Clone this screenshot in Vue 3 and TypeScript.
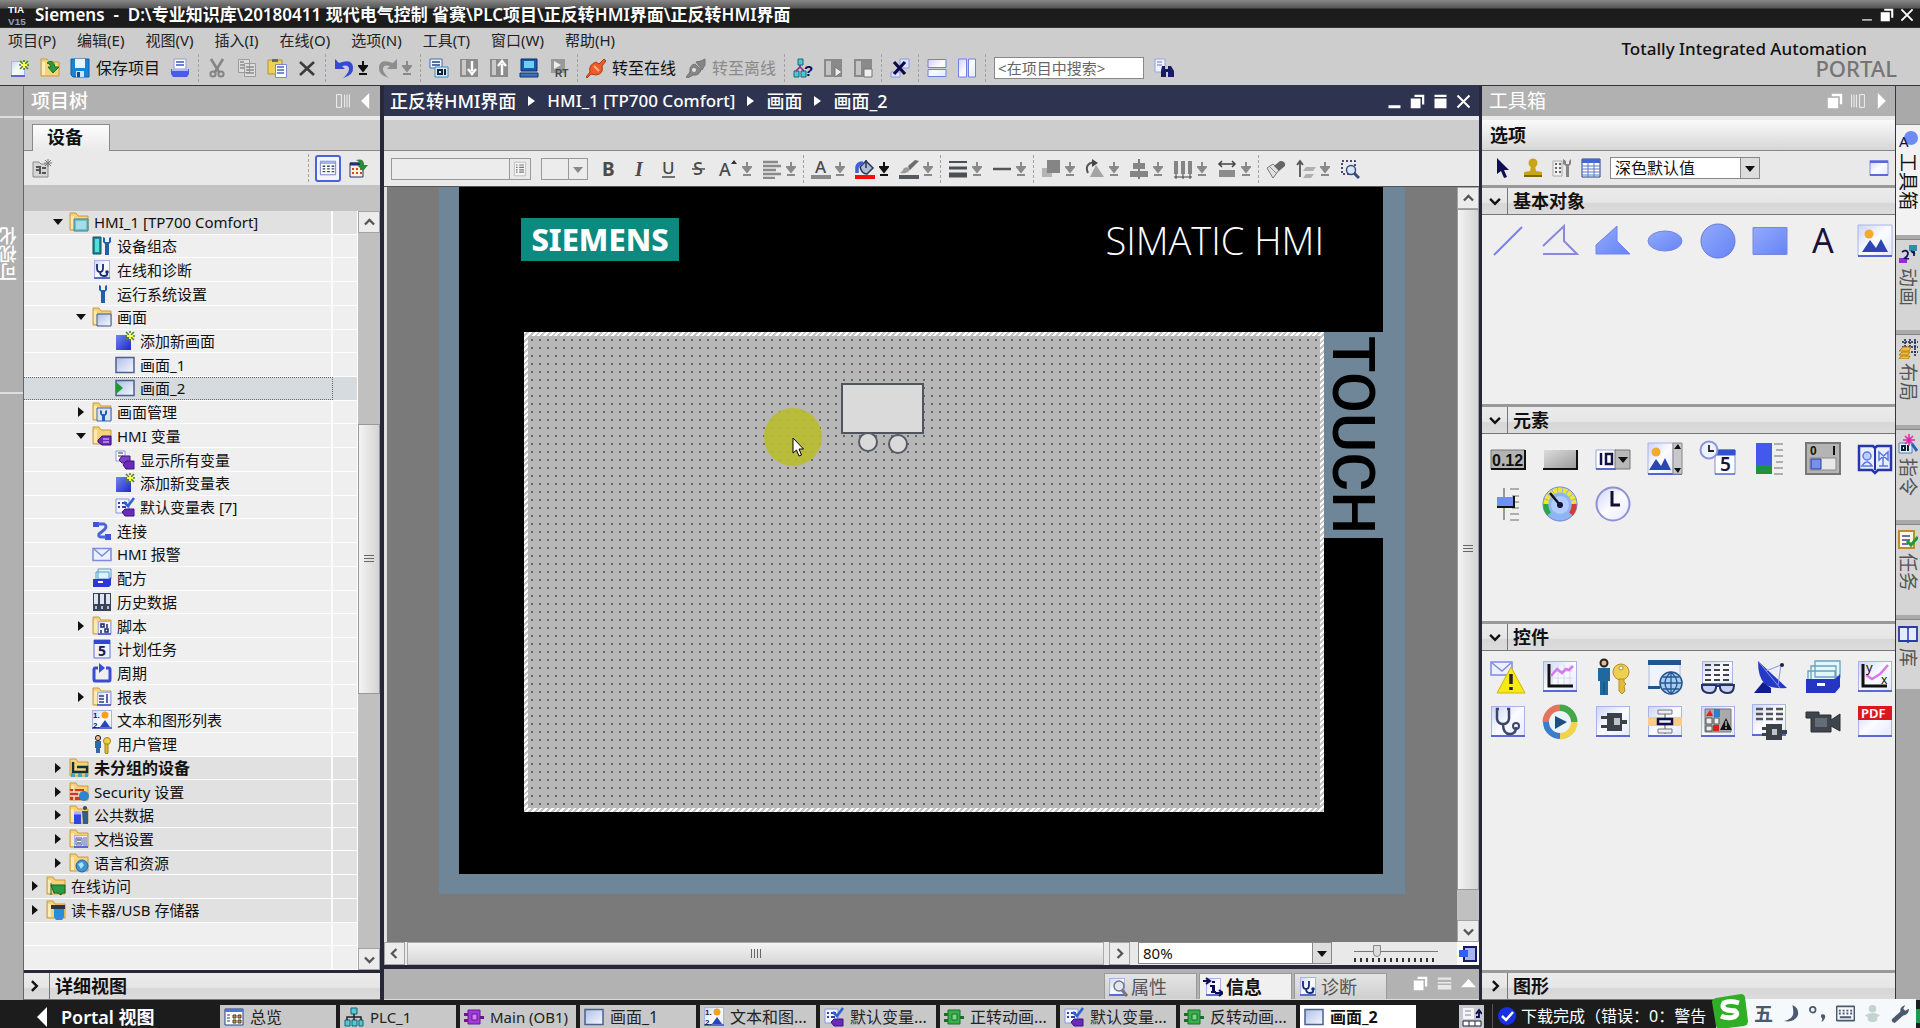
<script setup lang="ts">
import { h, ref } from 'vue'

interface TreeRow { t: string; i: string; l: number; a?: 'open' | 'shut'; g?: boolean; b?: boolean }
interface Tool { k: 'icon' | 'drop' | 'sep' | 'text'; n?: string; off?: boolean }

const folder = '<path d="M1 1h6l2 3h10v14H1z" fill="#f6d27a" stroke="#cc9a3c"/><path d="M2 4h3v13H2z" fill="#fdeab4"/>'
const page = (x = 1, y = 1, w = 18, hh = 18) => `<rect x="${x}.5" y="${y}.5" width="${w - 1}" height="${hh - 1}" fill="url(#gPage)" stroke="#a9b4e6"/><path d="M${x} ${y + hh - 1}h${w}" stroke="#5b6ad0" stroke-width="2"/>`
const star = (x: number, y: number) => `<path d="M${x - 5} ${y}h10M${x} ${y - 5}v10M${x - 4} ${y - 4}l8 8M${x + 4} ${y - 4}l-8 8" stroke="#4d8b1c" stroke-width="1.6"/><path d="M${x - 3} ${y}h6M${x} ${y - 3}v6" stroke="#ffff4a" stroke-width="2"/>`
const wrench = (x: number, c = '#1f5fae') => `<path d="M${x} 1v5l2 2v11h4V8l2-2V1l-2 1v4h-4V2z" fill="${c}"/>`
const tagShape = '<path d="M6 14l4-4h9v9h-9l-4-3z" fill="#6a2bb8" stroke="#3d1480"/><path d="M11 13h6M11 16h6" stroke="#e8d8ff"/>'
const steth = '<path d="M5 4v4q0 4 3 4t3-4V4M8 12q0 4 4 4t3-3" fill="none" stroke="#182a72" stroke-width="1.8"/><circle cx="15" cy="12" r="1.8" fill="#182a72"/>'
const blk = (c: string, d: string) => `<path d="M0 6h4v3H0zM0 12h4v3H0zM16 9h4v3h-4z" fill="${d}"/><path d="M4 3h12v14H4z" fill="${c}" stroke="${d}"/><path d="M8 7h5v6H8z" fill="#ffffff66" stroke="${d}"/>`
const person = (x: number) => `<circle cx="${x}" cy="4" r="2.6" fill="#e8b98a" stroke="#222"/><path d="M${x - 3} 7h6v7h-1v5h-4v-5h-1z" fill="#2d6aa5"/>`
const key = '<circle cx="15" cy="7" r="3.500" fill="#f0cf42" stroke="#a48418"/><path d="M13 10h3v9l-1 1-2-1z" fill="#e2b92c" stroke="#a48418"/>'

const icons: Record<string, string> = {
  tia: '<text x="1" y="8" font-size="9" font-weight="700" fill="#fff" font-family="Liberation Sans">TIA</text><text x="1" y="19" font-size="9" font-weight="700" fill="#93a0c4" font-family="Liberation Sans">V15</text>',
  new: page(1, 3, 14, 16) + star(14, 7),
  open: folder + '<path d="M7 5q6-5 8 4h4l-6 6-5-6h3q-1-4-4-4z" fill="#2b9a3c" stroke="#187026"/>',
  save: '<path d="M1 1h18v18H3l-2-2z" fill="#1685d8" stroke="#0a5ea6"/><path d="M5 1h10v9H5z" fill="#e9f3fd"/><path d="M6 13h8v6H6z" fill="#cfe3f7"/><path d="M7 14h3v5H7z" fill="#0a4f92"/>',
  print: '<path d="M4 1h12v10H4z" fill="#fff" stroke="#8d98d8"/><path d="M6 4h8M6 7h8" stroke="#4455c0" stroke-width="1.5"/><path d="M1 11h18v5l-2 3H3l-2-3z" fill="#4a5ce6"/><path d="M2 12h16" stroke="#aab6ff" stroke-width="2"/>',
  cut: '<path d="M4 1l8 13M16 1L8 14" stroke="#858585" stroke-width="2.6"/><circle cx="6" cy="16" r="2.6" fill="none" stroke="#858585" stroke-width="2"/><circle cx="14" cy="16" r="2.6" fill="none" stroke="#858585" stroke-width="2"/>',
  copy: '<path d="M1.500 1.500h11v13h-11zM7.500 5.500h11v13h-11z" fill="#dedede" stroke="#9b9b9b"/><path d="M3 4h4M3 7h4M3 10h4M9 9h8M9 12h8M9 15h8" stroke="#8a8a8a" stroke-width="1.5"/>',
  paste: '<path d="M1 2h14v14H1z" fill="#edd257" stroke="#b0952b"/><path d="M5 1h6v3H5z" fill="#666"/><path d="M8.500 6.500h11v13h-11z" fill="#fff" stroke="#7c89cf"/><path d="M10 9h7M10 12h7M10 15h7" stroke="#5363c0" stroke-width="1.5"/>',
  del: '<path d="M3 4l14 13M17 4L3 17" stroke="#3c3c3c" stroke-width="2.6"/>',
  undo: '<path d="M1 1v10h10L8 8q7-2 7 3 0 4-6 9 11-3 10-11-1-9-14-4z" fill="#3549d6"/>',
  redo: '<path d="M19 1v10H9l3-3q-7-2-7 3 0 4 6 9Q0 17 1 9q1-9 14-4z" fill="#8d8d8d"/>',
  drop: '<path d="M5 1v6M1 6h8L5 11zM1 14h8" stroke="currentColor" fill="currentColor" stroke-width="2"/>',
  compile: '<path d="M1 1h12v9H1z" fill="#f3f6ff" stroke="#3e68ac"/><path d="M3 4h8M3 7h8" stroke="#24467e" stroke-width="1.5"/><path d="M6 9h13v10H6z" fill="#d8ecff" stroke="#3e88bc"/><path d="M9 12h4v4H9zM16 11v6" fill="none" stroke="#112233" stroke-width="2"/>',
  down: '<path d="M1 1h18v18H1z" fill="#8c8c8c"/><path d="M3 2h4v15H3z" fill="#c9c9c9"/><path d="M13 3v10M9 11l4 5 4-5" stroke="#fff" stroke-width="2.4" fill="none"/>',
  up: '<path d="M1 1h18v18H1z" fill="#8c8c8c"/><path d="M3 2h4v15H3z" fill="#c9c9c9"/><path d="M13 17V6M9 8l4-5 4 5" stroke="#fff" stroke-width="2.4" fill="none"/>',
  sim: '<path d="M2 1h16v12H2z" fill="#1c58b0" stroke="#0c2f6c"/><path d="M5 3h10v7H5z" fill="#6ed0ee"/><path d="M1 15h18v4H1z" fill="#3d6fb8" stroke="#12356e"/>',
  rt: '<path d="M2 1h14v14H2z" fill="#9a9a9a"/><path d="M5 3l7 4-7 4z" fill="#eee"/><text x="6" y="19" font-size="10" font-weight="700" fill="#444" font-family="Liberation Sans">RT</text>',
  online: '<path d="M0 19l4-5q-2-7 6-10l3 2 5-5 2 2-4 5q2 8-6 9l-5-1-4 4z" fill="#ef5a28" stroke="#b23810"/><path d="M8 8l5 5" stroke="#ffb08c" stroke-width="2"/>',
  offline: '<path d="M0 19l4-5q-1-7 5-8l6 6q-2 6-8 5l-5 3zM10 4l5-1 4-2 0 6-3 5z" fill="#858585" stroke="#747474"/><circle cx="8" cy="12" r="2" fill="#e4e4e4"/>',
  nethelp: '<path d="M5 1h5v6H5zM1 13h5v6H1zM8 13h5v6H8z" fill="#48c8d2" stroke="#146a78"/><path d="M7 7v3M3 13l4-4 4 4" stroke="#8a2a8a" stroke-width="1.6" fill="none"/><text x="11" y="18" font-size="15" font-weight="700" fill="#0a0a5a" font-family="Liberation Sans">?</text>',
  start: '<path d="M1 1h18v18H1z" fill="#8a8a8a"/><path d="M3 3h5v14H3z" fill="#c4c4c4"/><path d="M12 9l7 5-7 5z" fill="#eee" stroke="#777"/>',
  stop: '<path d="M1 1h18v18H1z" fill="#8a8a8a"/><path d="M3 3h5v14H3z" fill="#c4c4c4"/><path d="M11 11h8v8h-8z" fill="#eee" stroke="#777"/>',
  closex: '<path d="M10 1h9v9h-9zM1 14h9v5H1z" fill="#dde3ff" stroke="#8d98e0"/><path d="M4 4l11 12M15 4L4 16" stroke="#0a0a4a" stroke-width="3.2"/>',
  splith: '<path d="M1 1.500h18v8H1zM1 11.500h18v7H1z" fill="url(#gPage)" stroke="#7080e0"/>',
  splitv: '<path d="M1.500 1h8v18h-8zM11.500 1h7v18h-7z" fill="url(#gPage)" stroke="#7080e0"/>',
  binoc: '<path d="M1 1h10v13H1z" fill="#eef1ff" stroke="#99a4dc"/><path d="M3 4h5M3 7h5" stroke="#6a78c8"/><path d="M8 8h3v3h3V8h3l3 5v6h-6v-5h-2v5H7v-6z" fill="#171c62"/>',
  addtree: '<path d="M1 4h6l2 2h7v13H1z" fill="#d4d4d4" stroke="#8a8a8a"/><path d="M4 9h4v7M4 12h3M10 10h4M10 15h4" stroke="#555" stroke-width="2" fill="none"/><path d="M16 1v8M12 5h8M13 2l6 6M19 2l-6 6" stroke="#777"/>',
  grid: '<path d="M1.500 2.500h17v15h-17z" fill="#fff" stroke="#6875b8"/><path d="M2 4h16" stroke="#9fb0ea" stroke-width="3"/><path d="M4 8h3M9 8h3M14 8h3M4 11h3M9 11h3M14 11h3M4 14h3M9 14h3M14 14h3" stroke="#3b4668" stroke-width="1.500"/>',
  gridgo: '<path d="M1 5h13v14H1z" fill="#f7f3da" stroke="#26306e"/><path d="M1 6h13" stroke="#26306e" stroke-width="3"/><path d="M3 11h2M7 11h2M11 11h2M3 15h2M7 15h2M11 15h2" stroke="#c9482c" stroke-width="2"/><path d="M7 2q8-2 8 5h4l-5 6-6-6h3q0-3-4-5z" fill="#2a8a3a"/>',
  device: folder + '<path d="M5 7h14v12H5z" fill="#6fc3d2" stroke="#3b7f92"/><path d="M7 9h10v8H7z" fill="#a9dde6"/>',
  config: '<path d="M1 1h8v17H1z" fill="#1f8a96" stroke="#0e4f58"/><path d="M3 3h4v13H3z" fill="#50e0dc"/>' + wrench(11),
  diag: page(2, 0, 16, 19) + steth, wrench: wrench(7),
  screens: folder + '<path d="M5 7h14v12H5z" fill="url(#gScr)" stroke="#3f5480"/>',
  addnew: '<path d="M1 4h15v15H1z" fill="url(#gBlue)"/>' + star(15, 5),
  screen: '<path d="M1 2.500h18v15H1z" fill="url(#gScr)" stroke="#4d5f8c" stroke-width="1.500"/>',
  screenrun: '<path d="M1 2.500h18v15H1z" fill="url(#gScr)" stroke="#4d5f8c" stroke-width="1.500"/><path d="M1 4l7 6-7 6z" fill="#1e9a30"/>',
  scrmgmt: folder + '<path d="M5 6h14v13H5z" fill="#d7e4fa" stroke="#4764a8"/><path d="M8 8v4l2 2v5h3v-5l2-2V8l-2 1v3h-3V9z" fill="#1f5fae"/>',
  tags: folder + tagShape,
  alltags: '<path d="M1 1h9v10H1z" fill="#fff" stroke="#8d98d8"/><path d="M3 3h5M3 6h5" stroke="#333"/><path d="M4 10l3-4h8v7H7z" fill="#7a45c8" stroke="#3d1480"/><path d="M8 15l3-4h8v8h-8z" fill="#6a2bb8" stroke="#3d1480"/>',
  deftags: '<path d="M1 2h13v14H1z" fill="#f2f4ff" stroke="#8d98d8"/><path d="M3 6h2M7 6h5M3 10h2M7 10h4" stroke="#3444a0" stroke-width="2"/><path d="M9 5l4 4 6-8" stroke="#2f60d0" stroke-width="2.500" fill="none"/><path d="M7 15l3-3h9v7h-9z" fill="#6a2bb8" stroke="#3d1480"/>',
  conn: '<path d="M1 1h6v5H1zM13 13h6v6h-6z" fill="#3c56d8"/><path d="M6 3h6q4 2 0 6l-5 4q-1 3 2 3h5" fill="none" stroke="#4a64dc" stroke-width="3"/>',
  mail: '<path d="M1 4.500h18v12H1z" fill="#edf0ff" stroke="#7d8be0" stroke-width="1.500"/><path d="M2 5l8 7 8-7" fill="none" stroke="#7d8be0" stroke-width="1.500"/>',
  recipe: '<path d="M6 1h13v10H6zM4 4h13v8H4z" fill="#dff1fb" stroke="#5b9dc4"/><path d="M1 11h16l2-2v8l-2 2H1z" fill="#2b36d8"/><path d="M6 13h5v2H6z" fill="#fff"/>',
  history: '<path d="M1 1h18v18H1z" fill="#3a4256"/><path d="M2 2h4v10H2zM8 2h4v10H8zM14 2h4v10h-4z" fill="#dfe4f2"/><path d="M3 14h2v3H3zM9 14h2v3H9zM15 14h2v3h-2z" fill="#b4bfd8"/>',
  script: folder + page(6, 5, 13, 14) + '<path d="M9 8h3v3H9zM15 8v4M9 14v3M13 13h3v3h-3z" fill="none" stroke="#1c2a60" stroke-width="1.500"/>',
  cal: '<path d="M2 1h16v18H2z" fill="#eef1ff" stroke="#6371d0"/><path d="M2 1h16v4H2z" fill="#3147d0"/><text x="6" y="17" font-size="14" font-weight="700" fill="#1b1b4a" font-family="Noto Sans">5</text>',
  cycle: '<path d="M6 5H3q-1 0-1 2v9q0 2 1 2h14q1 0 1-2V7q0-2-1-2h-3" fill="none" stroke="#3a4cd0" stroke-width="3"/><path d="M7 0l6 5-6 5z" fill="#3a4cd0"/>',
  report: folder + page(5, 5, 14, 14) + '<path d="M7 9h5M7 12h5M7 15h5M15 7v9" stroke="#303a80" stroke-width="1.500"/>',
  lists: page(0, 0, 20, 19) + '<text x="1" y="8" font-size="8" font-weight="700" fill="#112233" font-family="Liberation Sans">1.</text><text x="1" y="18" font-size="8" font-weight="700" fill="#112233" font-family="Liberation Sans">2.</text><circle cx="13" cy="5" r="3.500" fill="#f4a21c"/><path d="M13 10l5 7H8z" fill="#2647b8"/>',
  users: person(6) + key,
  ungrouped: folder + '<path d="M4 4v10h14V9H8" stroke="#12303c" stroke-width="2.500" fill="none"/><path d="M2 15h4v4H2zM9 15h4v4H9zM16 15h3v4h-3z" fill="#48a8b8"/>',
  security: folder + '<path d="M1 7h14v11H1z" fill="#c83c22"/><path d="M1 10h14M1 14h14M5 7v3M10 10v4M5 14v4" stroke="#f8e0d0" stroke-width="1.500"/><circle cx="15" cy="14" r="5" fill="#2a86d0"/>',
  common: folder + '<path d="M5 8h7v11H5z" fill="#3546dc"/><path d="M5 8h7" stroke="#aab2ff" stroke-width="3"/><circle cx="16" cy="3" r="2" fill="#444"/><path d="M13 6h6v13h-5z" fill="#2c5f94"/>',
  docs: folder + page(5, 6, 14, 13) + '<path d="M7 9h6v7H7zM15 8v9M17 8v9" stroke="#5060a8" fill="none"/><path d="M8 11h4M8 14h4" stroke="#222"/>',
  lang: folder + '<circle cx="13" cy="13" r="6" fill="#3795dc" stroke="#1e66a8"/><path d="M9 11l4-2 2 3-3 4zM16 12l2 3" fill="#a9e4f4"/>',
  access: folder + '<path d="M5 7v12M5 9h14v8h-3l-1 2-3-2H8z" fill="#2a9a44" stroke="#14602a"/>',
  card: folder + '<path d="M5 5h14v4H5z" fill="#2b3644"/><path d="M8 9h10v8l-2 3h-6l-2-3z" fill="#2b8cdc"/>',
  overview: '<path d="M1 2h18v16H1z" fill="#fff" stroke="#26408c"/><path d="M1 2h18v3H1z" fill="#4c74d8"/><path d="M3 8h3M3 11h3M3 14h3" stroke="#26408c"/><path d="M9 8h3v3H9zM14 8h3v3h-3zM9 13h3v3H9zM14 13h3v3h-3z" fill="#d8883c" stroke="#444422"/>',
  plc: '<path d="M7 1h6v6H7zM1 13h5v6H1zM8 13h5v6H8zM15 13h4v6h-4z" fill="#54c8d4" stroke="#146070"/><path d="M10 7v6M3 13v-3h14v3" fill="none" stroke="#222" stroke-width="1.500"/>',
  obp: blk('#a338dc', '#6a1698'), obg: blk('#36b048', '#167028'),
  list: '<path d="M3 1.500h14v17H3z" fill="#f4f4f4" stroke="#b5b5b5"/><path d="M5 5h2M9 5h6M5 8h2M9 8h6M5 11h2M9 11h6M5 14h2M9 14h6" stroke="#777" stroke-width="1.500"/>',
  bold: '<text x="4" y="17" font-size="19" font-weight="700" fill="#4a4a4a" font-family="Noto Sans">B</text>',
  italic: '<text x="7" y="17" font-size="20" font-style="italic" font-weight="700" fill="#4a4a4a" font-family="Liberation Serif">I</text>',
  under: '<text x="4" y="15" font-size="17" font-weight="500" fill="#4a4a4a" font-family="Noto Sans">U</text><path d="M4 18h13" stroke="#4a4a4a" stroke-width="1.500"/>',
  strike: '<text x="5" y="16" font-size="18" font-weight="500" fill="#4a4a4a" font-family="Noto Sans">S</text><path d="M4 10h13" stroke="#4a4a4a" stroke-width="1.500"/>',
  fsize: '<text x="1" y="17" font-size="18" font-weight="500" fill="#4a4a4a" font-family="Noto Sans">A</text><path d="M13 5l3-4 3 4z" fill="#333"/>',
  align: '<path d="M1 3h15M1 7h18M1 11h13M1 15h18M1 19h12" stroke="#8a8a8a" stroke-width="2.500"/>',
  fcolor: '<text x="4" y="14" font-size="17" font-weight="500" fill="#4a4a4a" font-family="Noto Sans">A</text><path d="M0 18h20" stroke="#8a8a8a" stroke-width="4"/>',
  fill: '<path d="M5 8l6-6 7 7-6 6q-5 0-7-7z" fill="#aebbd0" stroke="#24365c" stroke-width="1.500"/><path d="M11 9V1" stroke="#24365c" stroke-width="1.500"/><path d="M2 14V8q1-4 6-4" fill="none" stroke="#3f5fd8" stroke-width="3.500"/><path d="M0 18h20" stroke="#ee1010" stroke-width="4"/>',
  pen: '<path d="M1 14q3-2 4-5 5-2 6 1-1 5-10 4z" fill="#9a9a9a"/><path d="M9 7l7-6 4 1-9 9z" fill="#6c6c6c"/><path d="M0 18h20" stroke="#555a60" stroke-width="4"/>',
  lw: '<path d="M1 3h18" stroke="#4c5054" stroke-width="2"/><path d="M1 9h18" stroke="#4c5054" stroke-width="3"/><path d="M1 16h18" stroke="#4c5054" stroke-width="5"/>',
  ls: '<path d="M1 10h18" stroke="#555" stroke-width="2.500"/>',
  layer: '<path d="M1 9h10v9H1z" fill="#b4b4b4"/><path d="M6 1h13v13H6z" fill="#858585"/>',
  rotate: '<path d="M3 14q-4-9 6-11" fill="none" stroke="#555" stroke-width="2"/><path d="M7 0l6 4-6 4z" fill="#444"/><path d="M5 18l6-12 8 12z" fill="#a4a4a4"/>',
  center: '<path d="M10 0v20" stroke="#555" stroke-width="1.500"/><path d="M4 4h12v6H4zM1 12h18v6H1z" fill="#858585"/>',
  space: '<path d="M3 2v13M10 2v13M17 2v13" stroke="#858585" stroke-width="4"/><path d="M1 18h18M3 15v5M10 15v5M17 15v5" stroke="#444"/>',
  size: '<path d="M2 5h16M5 2L2 5l3 3M15 2l3 3-3 3" stroke="#444" fill="none" stroke-width="1.500"/><path d="M2 11h16v7H2z" fill="#8c8c8c"/>',
  format: '<path d="M1 9l6-4 6 6-6 8z" fill="#e2e2e2" stroke="#777"/><path d="M8 7l6-5q6 0 5 5l-6 5z" fill="#666"/><path d="M4 8l6 6" stroke="#888"/>',
  order: '<path d="M4 18V3M1 6l3-4 3 4" stroke="#555" fill="none" stroke-width="1.800"/><path d="M10 8h10l-3 4H7zM10 15h8l-3 4H7z" fill="#b0b0b0"/>',
  zoomsel: '<path d="M2 2h13v13H2z" fill="none" stroke="#151550" stroke-width="1.500" stroke-dasharray="2 2"/><circle cx="11" cy="11" r="4.500" fill="#d8e6fa" stroke="#3b4c7c" stroke-width="1.500"/><path d="M14 14l5 5" stroke="#3b4c7c" stroke-width="3"/>',
  pointer: '<path d="M3 0v16l4-3 3 7 3-1-3-7h5z" fill="#0e0e50"/>',
  stamp: '<circle cx="10" cy="5" r="4.500" fill="#c9a416"/><path d="M8 8h4l1 5 6 1v4H1v-4l6-1z" fill="#c9a416"/><path d="M1 18h18" stroke="#7c6610" stroke-width="2"/>',
  props: '<path d="M1 3h9v15H1z" fill="#f2f2f2" stroke="#aaa"/><path d="M3 6h2M7 6h2M3 10h2M7 10h2M3 14h2M7 14h2" stroke="#666" stroke-width="2"/><path d="M11 1v5l3 2v11h3V8l2-2V1l-2 2v3h-3V3z" fill="#858585"/>',
  table: '<path d="M1 1h18v18H1z" fill="#fff" stroke="#26408c"/><path d="M1 3h18" stroke="#3f68d0" stroke-width="4"/><path d="M1 8h18M1 11h18M1 14h18M1 17h18M7 3v16M13 3v16" stroke="#5b78c8"/>',
  win: '<path d="M1 2.500h18v15H1z" fill="url(#gPage)" stroke="#7d8be0"/><path d="M1 4h18M1 17h18" stroke="#5b6ad0" stroke-width="2"/>',
  propsTab: page(1, 1, 16, 18) + '<circle cx="11" cy="9" r="5" fill="#dfe6f4" stroke="#777" stroke-width="1.500"/><path d="M14 13l5 6" stroke="#777" stroke-width="3"/>',
  infoTab: page(3, 1, 15, 18) + '<path d="M0 4h6M3 1l4 3-4 3M12 16h7M16 13l4 3-4 3" stroke="#0c0c50" fill="none" stroke-width="2"/><path d="M9 4h3v2H9zM7 8h5v6h1v2H8v-2h1v-4H7z" fill="#0c0c50"/>',
  arrange: '<path d="M1 1h11v11H1z" fill="#f6f6fa"/><path d="M3 4h6M3 8h6" stroke="#888899"/><path d="M14 10h3V5M14 7l3-4 3 4" stroke="#0c0c50" fill="none" stroke-width="1.800"/><path d="M1 14h18v5H1zM7 14v5M13 14v5" fill="#fff" stroke="#222233"/>',
  ok: '<circle cx="10" cy="10" r="9" fill="#1530e6"/><path d="M5 10l4 4 7-8" stroke="#fff" stroke-width="2.500" fill="none"/>',
  overlap: '<path d="M6 1h13v13h-3V4H6z" fill="#fff"/><path d="M1 6h13v13H1z" fill="#fff"/>',
  sliders: '<path d="M2 2h6v16H2zM12 2v16M15 2v16M18 2v16" fill="none" stroke="#fff" stroke-width="1"/>',
  slidersR: '<path d="M12 2h6v16h-6zM8 2v16M5 2v16M2 2v16" fill="none" stroke="#fff" stroke-width="1"/>',
  triL: '<path d="M14 0v20L4 10z" fill="#fff"/>', triR: '<path d="M6 0v20l10-10z" fill="#fff"/>', triU: '<path d="M0 15h20L10 4z" fill="#fff"/>',
  min: '<path d="M2 15h16v4H2z" fill="#fff"/>', thinmin: '<path d="M3 17h14" stroke="#ddd" stroke-width="2"/>',
  max: '<path d="M2 1h16v3H2zM2 6h16v13H2z" fill="#fff"/>', x: '<path d="M2 2l16 16M18 2L2 18" stroke="#fff" stroke-width="2.600"/>',
  pane: '<path d="M1 2h18v3H1zM1 8h18v10H1z" fill="#e8e8e8"/><path d="M1 11h18" stroke="#b2b2b2" stroke-width="2"/>',
  chevD: '<path d="M3 7l7 7 7-7" stroke="currentColor" stroke-width="3.500" fill="none"/>', chevU: '<path d="M3 13l7-7 7 7" stroke="currentColor" stroke-width="3.500" fill="none"/>',
  chevR: '<path d="M7 3l7 7-7 7" stroke="currentColor" stroke-width="3.500" fill="none"/>', chevL: '<path d="M13 3l-7 7 7 7" stroke="currentColor" stroke-width="3.500" fill="none"/>',
  fit: '<path d="M6 3h12v14H6z" fill="#a7b5ee" stroke="#141c68" stroke-width="2"/><path d="M1 6h9v7H1z" fill="#2f62f4"/>',
  tA: '<circle cx="13" cy="9" r="7" fill="#6d8af6"/><text x="1" y="18" font-size="15" fill="#111144" font-family="Noto Sans">A</text>',
  tAnim: '<path d="M11 1h8v6h-8z" fill="#2f8fa8"/><path d="M1 14h8v5H1z" fill="#9a2ad8"/><path d="M13 7l4 3M4 8q5-3 6 1 0 3-3 5l4 1M16 7v5" fill="none" stroke="#14145a" stroke-width="1.800"/>',
  tLay: '<path d="M4 3h16M4 8h16M13 13h7M7 0v9M12 0v9M17 0v17" stroke="#14204a" stroke-width="1.500" stroke-dasharray="2 1"/><path d="M1 12l4-4h8l-2 4zM1 16l3-3h8l-2 3zM1 20l2-3h9l-2 3z" fill="#f4bc3c" stroke="#b4801a"/>',
  tCmd: '<path d="M1 9h13v10H1z" fill="#e6efff" stroke="#557ac0"/><path d="M4 12h3v4H4zM10 11v6" fill="none" stroke="#112233" stroke-width="2"/><path d="M11 0v12M5 6h12M7 2l8 8M15 2l-8 8" stroke="#e428a8" stroke-width="1.600"/><path d="M14 10l5 7" stroke="#2a60b8" stroke-width="3"/>',
  tTask: '<path d="M1 2h15v17H1z" fill="#fff8e0" stroke="#c08a30" stroke-width="2"/><path d="M4 7h8M4 11h8M4 15h6" stroke="#3444a0" stroke-width="1.500"/><path d="M9 12l4 4 7-8" stroke="#1e9a30" stroke-width="3" fill="none"/>',
  tLib: '<path d="M1 3h8l1 1 1-1h8v14h-8l-1 1-1-1H1z" fill="#e6ecff" stroke="#2a38a8" stroke-width="1.800"/><path d="M10 4v13" stroke="#2a38a8" stroke-width="1.500"/>',
  sogou: '<path d="M4 5l25-4q3 0 4 3l3 24q0 4-4 5L8 36q-3 0-4-3L0 9q0-3 4-4z" fill="#2fae26"/><path d="M27 10q-9-3-15 0-3 5 3 7l8 1q4 3-1 6-6 2-13-1" fill="none" stroke="#fff" stroke-width="5"/>',
  moon: '<path d="M12 1q7 3 6 10-3 9-15 7 9-2 10-8 0-5-1-9z" fill="#4a5870"/>',
  punct: '<circle cx="5" cy="6" r="3" fill="none" stroke="#4a5870" stroke-width="1.800"/><path d="M14 11q5-1 4 3-1 4-4 5 1-2 1-4-2-1-1-4z" fill="#4a5870"/>',
  kbd: '<rect x="0.500" y="2.500" width="19" height="15" rx="1" fill="none" stroke="#4a5870" stroke-width="2"/><path d="M3 7h2M7 7h2M11 7h2M15 7h2M3 10h2M7 10h2M11 10h2M15 10h2M4 14h12" stroke="#4a5870" stroke-width="2"/>',
  man: '<circle cx="10" cy="5" r="4" fill="#c3d3cd"/><path d="M2 12q8-5 16 0l-3 2v3q-5 4-10 0v-3z" fill="#c3d3cd"/>',
  tool: '<path d="M2 16L11 8q-1-5 5-7l-2 4 2 2 4-2q0 6-6 7l-9 8q-4-1-3-4z" fill="#4a5870"/>',
}

const big: Record<string, string> = {
  line: '<path d="M4 32L32 4" stroke="#7c80e4" stroke-width="2"/>',
  poly: '<path d="M1 23L22 3v15l13 13H1" fill="none" stroke="#8888e0" stroke-width="2"/>',
  polygon: '<path d="M1 31V22L22 3v15l13 13z" fill="url(#gShape)" stroke="#6f85ea"/>',
  ellipse: '<ellipse cx="18" cy="18" rx="17" ry="10" fill="url(#gShape)" stroke="#7a86dc"/>',
  circle: '<circle cx="18" cy="18" r="17" fill="url(#gShape)" stroke="#6a78d4"/>',
  rect: '<path d="M1 4.500h34v27H1z" fill="url(#gShape)" stroke="#7a86dc"/>',
  text: '<text x="7" y="30" font-size="34" fill="#14143c" font-family="Noto Sans">A</text>',
  image: '<path d="M1 2h34v31H1z" fill="url(#gPage)" stroke="#aab4e8"/><path d="M1 33h34" stroke="#4f66d4" stroke-width="2"/><circle cx="12" cy="11" r="4.500" fill="#f4aa30"/><path d="M5 29l8-12 6 8 5-9 7 13z" fill="#2b46b4"/>',
  num: '<path d="M1 9h34v19H1z" fill="#b4b4b4" stroke="#777"/><path d="M1 28h34V9" fill="none" stroke="#111" stroke-width="2"/><text x="2" y="25" font-size="16" font-weight="700" fill="#111" font-family="Liberation Sans">0.12</text>',
  btn: '<path d="M2 9h32v18H2z" fill="url(#gBtn)"/><path d="M1 28h34V9" fill="none" stroke="#111" stroke-width="2"/>',
  combo: '<path d="M1 9h20v19H1z" fill="#fff" stroke="#9aa4e0"/><path d="M1 28h20" stroke="#5b6ad0" stroke-width="2"/><path d="M6 12v12M11 13h6v10h-6z" stroke="#111144" stroke-width="2.500" fill="none"/><path d="M20 9h15v19H20z" fill="#b8b8b8" stroke="#777"/><path d="M23 16h10l-5 6z" fill="#111"/>',
  symlist: '<path d="M1 2h25v31H1z" fill="url(#gPage)" stroke="#aab4e8"/><circle cx="9" cy="11" r="4.500" fill="#f4aa30"/><path d="M2 29l7-11 5 7 4-8 6 12z" fill="#2b46b4"/><path d="M1 33h34" stroke="#4f66d4" stroke-width="2"/><path d="M26 2h9v31h-9z" fill="#c8c8c8" stroke="#888"/><path d="M27 8l4-5 3 5zM27 27l4 5 3-5z" fill="#111"/>',
  datetime: '<path d="M15 9h20v24H15z" fill="#fff" stroke="#8090e0"/><path d="M15 9h20v5H15zM15 33h20" fill="#2f52d0" stroke="#2f52d0"/><text x="20" y="30" font-size="19" font-weight="600" fill="#14143c" font-family="Noto Sans">5</text><circle cx="9" cy="9" r="8.500" fill="#eef1ff" stroke="#8a96d8" stroke-width="2"/><path d="M9 4v6h5" fill="none" stroke="#222" stroke-width="1.800"/>',
  bar: '<path d="M4 2h16v23H4z" fill="#4358ec"/><path d="M4 24h16v9H4z" fill="#219040"/><path d="M22 3h9M24 9h7M22 15h9M24 21h7M22 27h9M22 33h9" stroke="#999" stroke-width="1.500"/>',
  sw: '<path d="M1 2h34v31H1z" fill="#b4b4b4" stroke="#777" stroke-width="2"/><text x="5" y="14" font-size="12" font-weight="700" fill="#111" font-family="Liberation Sans">0</text><path d="M29 5v9" stroke="#111" stroke-width="2"/><path d="M5 17h26v12H5z" fill="#e8e8e8" stroke="#888"/><path d="M6 18h10v10H6z" fill="#7890ec" stroke="#223c9c"/>',
  library: '<path d="M2 5h14l2 2 2-2h14v24H21l-3 3-3-3H2z" fill="#e9eeff" stroke="#2536a8" stroke-width="2.500"/><path d="M18 6v23" stroke="#2536a8" stroke-width="2"/><circle cx="10" cy="15" r="4" fill="#c0ccff" stroke="#5a78e4" stroke-width="1.500"/><path d="M5 25q5-8 10 0zM22 11l9 8V11l-9 8zM26 17v8M22 25h9" stroke="#5a78e4" stroke-width="1.500" fill="none"/>',
  slider: '<path d="M14 2v32" stroke="#999" stroke-width="2"/><path d="M20 3h9M22 10h7M20 16h9M22 22h7M20 28h9M20 34h9" stroke="#999" stroke-width="1.500"/><path d="M7 11h16v9H7z" fill="#6f90ee"/><path d="M7 21h17V10" fill="none" stroke="#111" stroke-width="2"/>',
  gauge: '<circle cx="18" cy="18" r="17" fill="#8fb4f4" stroke="#6f84d0"/><path d="M4 18A14 14 0 0 1 32 18" fill="none" stroke="#f2e62c" stroke-width="5" stroke-dasharray="4 1"/><path d="M4 18a14 14 0 0 0 3 10" fill="none" stroke="#28a848" stroke-width="5"/><path d="M32 18a14 14 0 0 1-3 10" fill="none" stroke="#d83c34" stroke-width="5"/><circle cx="18" cy="19" r="9" fill="#b0ccfa"/><path d="M8 7l10 12" stroke="#111" stroke-width="2.500"/><circle cx="18" cy="19" r="3" fill="#111144"/>',
  clock: '<circle cx="18" cy="18" r="16.500" fill="url(#gPage)" stroke="#8f90d4" stroke-width="2"/><path d="M17 5v14h8" fill="none" stroke="#111130" stroke-width="3"/>',
  alarm: '<path d="M1 3h21v13H1z" fill="#edf0ff" stroke="#7d8be0" stroke-width="1.500"/><path d="M2 4l10 8 9-8" fill="none" stroke="#7d8be0" stroke-width="1.500"/><path d="M21 8L35 34H7z" fill="#f8e814" stroke="#cdb60a"/><path d="M21 15v10M21 28v3" stroke="#222" stroke-width="3.500"/>',
  trend: page(1, 2, 34, 31) + '<path d="M10 6v20M16 6v20M22 6v20M28 6v20M7 12h23M7 19h23" stroke="#d2d8ee"/><path d="M7 5v22h24" fill="none" stroke="#111" stroke-width="3"/><path d="M9 17l6-7 5 4 4-4 3 1 4-4" fill="none" stroke="#d878ee" stroke-width="2.500"/>',
  user: '<circle cx="9" cy="4" r="3.500" fill="#e8b98a" stroke="#222" stroke-width="2"/><path d="M3 9h12v13h-2v14H5V22H3z" fill="#1f699e"/><path d="M9 23v12" stroke="#164a72"/><circle cx="26" cy="13" r="8" fill="#edd052" stroke="#b0902c"/><circle cx="26" cy="9" r="2" fill="#fff" stroke="#b0902c"/><path d="M24 20h5v3l2 2-2 2 1 5-3 3-3-3z" fill="#e2be38" stroke="#b0902c"/>',
  web: '<path d="M2 2h31v26H2z" fill="#eef3fc" stroke="#b4bede"/><path d="M1 1h33v5H1zM1 27h12v3H1z" fill="#24568e"/><circle cx="24" cy="24" r="11" fill="#a8ccf2" stroke="#24568e" stroke-width="1.500"/><path d="M13 24h22M24 13v22M24 13q-12 11 0 22M24 13q12 11 0 22M16 18h16M16 30h16" fill="none" stroke="#24568e" stroke-width="1.300"/>',
  watch: page(2, 2, 31, 24) + '<path d="M5 6h6M14 6h6M23 6h6M5 11h6M14 11h6M23 11h6M5 16h6M14 16h6M23 16h6M5 21h6M14 21h6M23 21h6" stroke="#444" stroke-width="2"/><path d="M2 26h14v3q-1 5-6 5-7 0-8-5zM20 26h14q0 8-6 8-7 0-8-5zM16 27h4" fill="#c5d2f4" stroke="#273264" stroke-width="2"/>',
  dish: '<path d="M6 2q0 17 7 23 7 5 22 4z" fill="#2439c8"/><path d="M6 2l22 27M14 12l15-6-3 20" fill="none" stroke="#8a96e4" stroke-width="1"/><circle cx="30" cy="6" r="2" fill="#222"/><path d="M11 23l8 6v5H2z" fill="#101c94"/>',
  recipes: '<path d="M10 2h25v16H10zM6 7h25v14H6zM3 12h27v9H3z" fill="#e4f5fc" stroke="#66a2be" stroke-width="1.300"/><path d="M1 20h29l5-5v13l-5 6H1z" fill="#2536c4"/><path d="M12 24h8v3h-8z" fill="#fff"/>',
  xy: page(1, 2, 34, 31) + '<path d="M6 5v22h24" fill="none" stroke="#111" stroke-width="3"/><path d="M9 16l6 4 8-5 8-9" fill="none" stroke="#d878ee" stroke-width="2.500"/><text x="9" y="13" font-size="13" fill="#111" font-family="Noto Sans">y</text><text x="24" y="25" font-size="12" fill="#111" font-family="Noto Sans">x</text>',
  sysdiag: page(1, 2, 34, 31) + '<path d="M9 5H7v10q1 5 6 5t6-5V5h-2M13 20q0 10 7 10 6 0 6-7" fill="none" stroke="#3c4668" stroke-width="2.500"/><circle cx="26" cy="22" r="3" fill="none" stroke="#3c4668" stroke-width="2"/>',
  media: '<circle cx="18" cy="18" r="13.500" fill="none" stroke="#3c7cc8" stroke-width="7"/><path d="M4 18A14 14 0 0 1 18 4" fill="none" stroke="#e4745c" stroke-width="7"/><path d="M18 4A14 14 0 0 1 32 18" fill="none" stroke="#42a848" stroke-width="7"/><path d="M32 18A14 14 0 0 1 18 32" fill="none" stroke="#f0d44c" stroke-width="7"/><circle cx="18" cy="18" r="11" fill="#eaf4fb"/><path d="M13 12l12 6-12 7z" fill="#1c5084"/>',
  plug: page(1, 2, 34, 31) + '<path d="M6 12h7v3H6zM6 21h7v3H6zM12 9h15v18H12zM26 16h6v4h-6z" fill="#3c4148"/><path d="M19 14h6v7h-6z" fill="#bac4cc"/>',
  flow: page(1, 2, 34, 31) + '<path d="M1 13h34v9H1z" fill="#fccb86"/><path d="M18 6v24" stroke="#555"/><path d="M11 6h14v4H11zM11 25h14v4H11z" fill="#eee" stroke="#777"/><path d="M11 15h14v5H11z" fill="#eeeeff" stroke="#111144" stroke-width="2.500"/>',
  symbols: page(1, 2, 34, 31) + '<path d="M5 5h26v23H5z" fill="#aaa" stroke="#777"/><path d="M6 12l4-6 3 6z" fill="#e02020"/><path d="M14 5h6v8h-6z" fill="#2880d0"/><path d="M6 14h6v6H6zM14 14h5v6h-5zM6 22h6v5H6z" fill="#eee" stroke="#555"/><path d="M13 21h6v6h-6z" fill="#d82020"/><path d="M26 14l6 12H20z" fill="#111"/><path d="M26 17v5M26 23v2" stroke="#fff"/>',
  gridplug: page(0, 0, 34, 32) + '<path d="M4 5h7M14 5h7M24 5h7M4 10h7M14 10h7M24 10h7M4 15h7M14 15h7M24 15h7" stroke="#555" stroke-width="2.500"/><path d="M10 23h5v3h-5zM10 29h5v3h-5zM14 20h16v16H14zM30 26h5v4h-5z" fill="#3c4148"/><path d="M20 25h5v6h-5z" fill="#bac4cc"/>',
  camera: '<path d="M1 8h13v3h12v5l9-6v17l-9-5v6H6V14H1z" fill="#3f454c" stroke="#2a2e34"/><path d="M10 14h12v9H10z" fill="#646c76"/>',
  pdf: page(1, 2, 34, 31) + '<path d="M1 2h34v14H1z" fill="#d81a20"/><text x="4" y="14" font-size="13" font-weight="600" fill="#fff" font-family="Noto Sans">PDF</text>',
}

const Ico = (p: { n: string }) => h('svg', { class: 'ico', viewBox: p.n === 'drop' ? '0 0 10 16' : p.n === 'sogou' ? '0 0 36 36' : '0 0 20 20', 'aria-hidden': 'true', innerHTML: icons[p.n] })
Ico.props = ['n']
const Big = (p: { n: string }) => h('svg', { class: 'big', viewBox: '0 0 36 36', 'aria-hidden': 'true', innerHTML: big[p.n] })
Big.props = ['n']

const latin = (s: string) => /^[A-Z]/.test(s)

const menus = ['项目(P)', '编辑(E)', '视图(V)', '插入(I)', '在线(O)', '选项(N)', '工具(T)', '窗口(W)', '帮助(H)']

const parse = (s: string): Tool[] => s.split(' ').map(x => {
  if (x === '|') return { k: 'sep' }
  if (x === 'v') return { k: 'drop' }
  if (x === 'v-') return { k: 'drop', off: true }
  if (x.startsWith('"')) return { k: 'text', n: x.slice(1).replace('-', ''), off: x.endsWith('-') }
  return { k: 'icon', n: x }
})
const mainTools = parse('new open save "保存项目 print | cut copy paste del | undo v redo v- | compile down up sim rt | online "转至在线 offline "转至离线- | nethelp start stop | closex | splith splitv |')
const fmtTools = parse('bold italic under strike fsize v- align v- | fcolor v- fill v pen v- | lw v- ls v- | layer v- rotate v- center v- space v- size v- | format order v- zoomsel')

const rows: TreeRow[] = [
  { t: 'HMI_1 [TP700 Comfort]', i: 'device', l: 1, a: 'open', g: true },
  { t: '设备组态', i: 'config', l: 2 }, { t: '在线和诊断', i: 'diag', l: 2 }, { t: '运行系统设置', i: 'wrench', l: 2 },
  { t: '画面', i: 'screens', l: 2, a: 'open' },
  { t: '添加新画面', i: 'addnew', l: 3 }, { t: '画面_1', i: 'screen', l: 3 }, { t: '画面_2', i: 'screenrun', l: 3 },
  { t: '画面管理', i: 'scrmgmt', l: 2, a: 'shut' }, { t: 'HMI 变量', i: 'tags', l: 2, a: 'open' },
  { t: '显示所有变量', i: 'alltags', l: 3 }, { t: '添加新变量表', i: 'addnew', l: 3 }, { t: '默认变量表 [7]', i: 'deftags', l: 3 },
  { t: '连接', i: 'conn', l: 2 }, { t: 'HMI 报警', i: 'mail', l: 2 }, { t: '配方', i: 'recipe', l: 2 }, { t: '历史数据', i: 'history', l: 2 },
  { t: '脚本', i: 'script', l: 2, a: 'shut' }, { t: '计划任务', i: 'cal', l: 2 }, { t: '周期', i: 'cycle', l: 2 },
  { t: '报表', i: 'report', l: 2, a: 'shut' }, { t: '文本和图形列表', i: 'lists', l: 2 }, { t: '用户管理', i: 'users', l: 2 },
  { t: '未分组的设备', i: 'ungrouped', l: 1, a: 'shut', g: true, b: true }, { t: 'Security 设置', i: 'security', l: 1, a: 'shut', g: true },
  { t: '公共数据', i: 'common', l: 1, a: 'shut', g: true }, { t: '文档设置', i: 'docs', l: 1, a: 'shut', g: true },
  { t: '语言和资源', i: 'lang', l: 1, a: 'shut', g: true }, { t: '在线访问', i: 'access', l: 0, a: 'shut', g: true },
  { t: '读卡器/USB 存储器', i: 'card', l: 0, a: 'shut', g: true },
]
const selected = ref('画面_2')

const crumbs = ['正反转HMI界面', 'HMI_1 [TP700 Comfort]', '画面', '画面_2']
const sections = [
  { t: '基本对象', grow: 218, items: ['line', 'poly', 'polygon', 'ellipse', 'circle', 'rect', 'text', 'image'] },
  { t: '元素', grow: 217, items: ['num', 'btn', 'combo', 'symlist', 'datetime', 'bar', 'sw', 'library', 'slider', 'gauge', 'clock'] },
  { t: '控件', grow: 350, items: ['alarm', 'trend', 'user', 'web', 'watch', 'dish', 'recipes', 'xy', 'sysdiag', 'media', 'plug', 'flow', 'symbols', 'gridplug', 'camera', 'pdf'] },
]
const lines = (a: string[]) => a.length > 8 ? [a.slice(0, 8), a.slice(8)] : [a]
const sideTabs = [['工具箱', 'tA'], ['动画', 'tAnim'], ['布局', 'tLay'], ['指令', 'tCmd'], ['任务', 'tTask'], ['库', 'tLib']]
const inspector = [['属性', 'propsTab'], ['信息', 'infoTab'], ['诊断', 'diag']]
const windows = [['总览', 'overview'], ['PLC_1', 'plc'], ['Main (OB1)', 'obp'], ['画面_1', 'screen'], ['文本和图...', 'lists'], ['默认变量...', 'deftags'], ['正转动画...', 'obg'], ['默认变量...', 'deftags'], ['反转动画...', 'obg'], ['画面_2', 'screen']]
const zoom = ref('80%')
const zoomPos = ref(25)
const preset = ref('深色默认值')
</script>

<template>
  <div class="app">
    <svg class="defs" aria-hidden="true">
      <defs>
        <linearGradient id="gPage" x1="0" y1="0" x2="1" y2="1"><stop offset="0" stop-color="#ccd4fb" /><stop offset=".5" stop-color="#fbfcff" /><stop offset="1" stop-color="#e4e9fd" /></linearGradient>
        <linearGradient id="gScr" x1="0" y1="0" x2="1" y2="1"><stop offset="0" stop-color="#aebfe6" /><stop offset="1" stop-color="#f6f8ff" /></linearGradient>
        <linearGradient id="gBlue" x1="0" y1="0" x2="1" y2="1"><stop offset="0" stop-color="#6f86f4" /><stop offset="1" stop-color="#2028c0" /></linearGradient>
        <linearGradient id="gShape" x1="0" y1="0" x2="1" y2="1"><stop offset="0" stop-color="#93aafc" /><stop offset="1" stop-color="#6584f6" /></linearGradient>
        <linearGradient id="gBtn" x1="0" y1="0" x2="1" y2="1"><stop offset="0" stop-color="#dcdcdc" /><stop offset="1" stop-color="#9c9c9c" /></linearGradient>
      </defs>
    </svg>

    <header class="title">
      <Ico n="tia" class="logo" />
      <h1>Siemens&nbsp; -&nbsp; D:\专业知识库\20180411 现代电气控制 省赛\PLC项目\正反转HMI界面\正反转HMI界面</h1>
      <button aria-label="最小化"><Ico n="thinmin" /></button>
      <button aria-label="还原"><Ico n="overlap" /></button>
      <button aria-label="关闭"><Ico n="x" /></button>
    </header>

    <div class="top">
      <div class="bars">
        <nav class="menus"><button v-for="m in menus" :key="m">{{ m }}</button></nav>
        <div class="tools">
          <template v-for="(t, i) in mainTools" :key="i">
            <i v-if="t.k === 'sep'" class="sep"></i>
            <button v-else-if="t.k === 'text'" class="lbl" :class="{ off: t.off }">{{ t.n }}</button>
            <button v-else-if="t.k === 'drop'" class="drop" :class="{ off: t.off }" aria-label="更多"><Ico n="drop" /></button>
            <button v-else :aria-label="t.n"><Ico :n="t.n!" /></button>
          </template>
          <input class="search" type="text" placeholder="<在项目中搜索>" aria-label="在项目中搜索" />
          <button aria-label="搜索"><Ico n="binoc" /></button>
        </div>
      </div>
      <div class="brand"><span>Totally Integrated Automation</span><b>PORTAL</b></div>
    </div>

    <main class="work">
      <div class="leftstrip"><span>可视化</span></div>

      <aside class="project">
        <div class="phead"><h2>项目树</h2><button aria-label="自动折叠"><Ico n="sliders" /></button><button aria-label="折叠"><Ico n="triL" /></button></div>
        <div class="tabrow"><button class="tab">设备</button></div>
        <div class="ptools"><button aria-label="添加"><Ico n="addtree" /></button><span class="fill"></span><i class="sep"></i><button class="framed" aria-label="总览"><Ico n="grid" /></button><button aria-label="打开"><Ico n="gridgo" /></button></div>
        <div class="treewrap">
          <ul class="tree">
            <li v-for="r in rows" :key="r.t" :class="{ g: r.g, sel: r.t === selected, b: r.b }" @click="selected = r.t">
              <div class="cell" :style="{ paddingLeft: r.l * 23 + 4 + 'px' }">
                <span class="arrow" :class="r.a"></span><Ico :n="r.i" /><span>{{ r.t }}</span>
              </div>
            </li>
            <li><div class="cell"></div></li>
            <li><div class="cell"></div></li>
          </ul>
          <div class="vbar"><button aria-label="上"><Ico n="chevU" /></button><div class="space s192"></div><div class="thumb t268"><i></i></div><div class="space s255"></div><button aria-label="下"><Ico n="chevD" /></button></div>
        </div>
        <button class="section foot"><span class="chev"><Ico n="chevR" /></span>详细视图</button>
      </aside>

      <section class="editor">
        <div class="ehead">
          <template v-for="(c, i) in crumbs" :key="c"><i v-if="i" class="caret"></i><span :class="{ latin: latin(c) }">{{ c }}</span></template>
          <div class="wbtns"><button aria-label="最小化"><Ico n="min" /></button><button aria-label="浮动"><Ico n="overlap" /></button><button aria-label="最大化"><Ico n="max" /></button><button aria-label="关闭"><Ico n="x" /></button></div>
        </div>
        <div class="blank"></div>
        <div class="tools fmt">
          <div class="fontbox"><input type="text" aria-label="字体" /><button aria-label="字体列表"><Ico n="list" /></button></div>
          <span class="pick small"><select aria-label="字号"><option></option></select></span>
          <template v-for="(t, i) in fmtTools" :key="i">
            <i v-if="t.k === 'sep'" class="sep"></i>
            <button v-else-if="t.k === 'drop'" class="drop" :class="{ off: t.off }" aria-label="更多"><Ico n="drop" /></button>
            <button v-else :aria-label="t.n"><Ico :n="t.n!" /></button>
          </template>
        </div>
        <div class="stage">
          <div class="canvas">
            <div class="device">
              <div class="black">
                <span class="siemens">SIEMENS</span><span class="simatic">SIMATIC HMI</span>
                <div class="screen">
                  <i class="halo"></i><i class="cart"></i><i class="wheel w1"></i><i class="wheel w2"></i>
                  <svg class="cursor" viewBox="0 0 12 20"><path d="M1 1v15l3.500-3 2.500 6 2.500-1-2.500-6H11.500z" fill="#fff" stroke="#000" /></svg>
                </div>
                <span class="touch">TOUCH</span>
              </div>
            </div>
          </div>
          <div class="vbar"><button aria-label="上"><Ico n="chevU" /></button><div class="thumb t682"><i></i></div><div class="space s30"></div><button aria-label="下"><Ico n="chevD" /></button></div>
        </div>
        <div class="hrow">
          <button class="hb" aria-label="左"><Ico n="chevL" /></button><div class="hthumb"><i></i></div><button class="hb" aria-label="右"><Ico n="chevR" /></button>
          <span class="pick zoom"><select v-model="zoom" aria-label="缩放"><option>80%</option><option>100%</option></select></span>
          <div class="range"><input v-model="zoomPos" type="range" min="0" max="100" aria-label="缩放滑块" /><i></i></div>
          <button class="fit" aria-label="适合窗口"><Ico n="fit" /></button>
        </div>
        <div class="inspector">
          <button v-for="(t, i) in inspector" :key="t[0]" class="itab" :class="{ on: i === 1 }"><Ico :n="t[1]" />{{ t[0] }}</button>
          <div class="ibtns"><button aria-label="浮动"><Ico n="overlap" /></button><button aria-label="窗格"><Ico n="pane" /></button><button aria-label="展开"><Ico n="triU" /></button></div>
        </div>
      </section>

      <aside class="toolbox">
        <div class="phead"><h2>工具箱</h2><button aria-label="浮动"><Ico n="overlap" /></button><button aria-label="自动折叠"><Ico n="slidersR" /></button><button aria-label="折叠"><Ico n="triR" /></button></div>
        <h3 class="opt">选项</h3>
        <div class="ptools otools">
          <button aria-label="选择"><Ico n="pointer" /></button><button aria-label="图章"><Ico n="stamp" /></button><button aria-label="属性"><Ico n="props" /></button><button aria-label="表格"><Ico n="table" /></button>
          <span class="pick preset"><select v-model="preset" aria-label="样式"><option>深色默认值</option></select></span>
          <span class="fill"></span><button aria-label="窗口"><Ico n="win" /></button>
        </div>
        <section v-for="s in sections" :key="s.t" class="group" :style="{ flexGrow: s.grow }">
          <button class="section"><span class="chev"><Ico n="chevD" /></span>{{ s.t }}</button>
          <div v-for="(l, i) in lines(s.items)" :key="i" class="palette">
            <button v-for="n in l" :key="n" :aria-label="n"><Big :n="n" /></button>
            <span v-for="k in 8 - l.length" :key="k" class="pad"></span>
          </div>
        </section>
        <button class="section last"><span class="chev"><Ico n="chevR" /></span>图形</button>
      </aside>

      <nav class="sidetabs">
        <button v-for="(t, i) in sideTabs" :key="t[0]" :class="['st' + i, { on: i === 0 }]"><Ico :n="t[1]" /><span>{{ t[0] }}</span></button>
      </nav>
    </main>

    <footer class="taskbar">
      <button class="portal"><Ico n="triL" />Portal 视图</button>
      <button v-for="(w, i) in windows" :key="i" class="task" :class="{ on: i === 9, latin: latin(w[0]) }"><Ico :n="w[1]" />{{ w[0] }}</button>
      <button class="arr" aria-label="排列"><Ico n="arrange" /></button>
      <div class="status"><Ico n="ok" /><span>下载完成（错误：0：警告</span></div>
      <i class="edge"></i>
      <div class="ime"><Ico n="sogou" class="sg" /><button>五</button><Ico n="moon" /><Ico n="punct" /><Ico n="kbd" /><Ico n="man" /><Ico n="tool" /></div>
    </footer>
  </div>
</template>

<style>
html, body { margin: 0; background: #1c1c1c; }
</style>

<style scoped>
.app { height: 100vh; display: flex; flex-direction: column; overflow: hidden; font: 16px/20px "Noto Sans", "Noto Sans CJK SC", sans-serif; color: #111; white-space: nowrap; }
.app * { box-sizing: border-box; }
.defs { position: absolute; width: 0; height: 0; }
button { display: flex; align-items: center; justify-content: center; border: 0; padding: 0; margin: 0; background: none; font: inherit; color: inherit; flex: none; }
input, select { font: inherit; color: inherit; margin: 0; border-radius: 0; }
h1, h2, h3, ul { margin: 0; padding: 0; list-style: none; }
.ico { width: 20px; height: 20px; display: block; flex: none; }
.big { width: 36px; height: 36px; display: block; overflow: visible; }
.fill { flex: 1; }

.title { height: 28px; flex: none; display: flex; align-items: center; gap: 6px; padding: 2px 6px 0 7px; background: linear-gradient(#888 0, #555 8px, #1c1c1c 9px); border-bottom: 1px solid #333; color: #fff; }
.title .logo { width: 22px; height: 22px; }
.title h1 { flex: 1; font-size: 17px; line-height: 24px; font-weight: 600; }
.title button .ico { width: 14px; height: 14px; }

.top { height: 58px; flex: none; display: flex; justify-content: space-between; background: #cdcdcd; border-bottom: 1px solid #33343c; }
.menus { display: flex; gap: 21px; height: 24px; padding-left: 8px; align-items: center; color: #222; font-size: 15px; }
.tools { display: flex; align-items: center; gap: 10px; height: 32px; padding-left: 10px; }
.tools .sep, .ptools .sep { width: 1px; height: 28px; margin: 0 -2px; border-left: 1px dashed #a2a2a2; }
.lbl { margin-left: -4px; }
.off { color: #8a8a8a; }
.drop { margin-left: -6px; }
.drop .ico { width: 10px; height: 16px; }
.search { width: 150px; height: 22px; padding: 0 3px; border: 1px solid #888; background: #fff; font-size: 15px; }
.search::placeholder { color: #666; opacity: 1; }
.brand { display: flex; flex-direction: column; padding: 11px 23px 0 0; font-size: 17px; font-weight: 500; line-height: 20px; }
.brand span { padding-right: 30px; }
.brand b { align-self: flex-end; font-size: 22px; line-height: 18px; font-weight: 500; color: #757575; }

.work { flex: 1; min-height: 0; display: flex; background: #26283a; }
.leftstrip { width: 24px; flex: none; background: #b0b0b0; border-right: 1px solid #666; display: flex; flex-direction: column; justify-content: flex-start; background-image: linear-gradient(#ddd, #ddd), linear-gradient(#ddd, #ddd); background-size: 100% 2px; background-repeat: no-repeat; background-position: 0 30px, 0 306px; overflow: hidden; }
.leftstrip span { writing-mode: vertical-rl; transform: rotate(180deg); margin-top: 141px; color: #fff; font-size: 18px; line-height: 18px; font-weight: 500; align-self: flex-start; }

.project { width: 356px; flex: none; display: flex; flex-direction: column; background: #c3c3c3; }
.phead { height: 30px; flex: none; display: flex; align-items: center; gap: 7px; padding: 0 6px 0 7px; background: #b1b1b1; color: #fff; }
.phead h2 { flex: 1; font-size: 19px; line-height: 26px; font-weight: 500; }
.phead .ico { width: 16px; height: 16px; }
.tabrow { height: 35px; flex: none; padding: 4px 0 0 8px; background: #cdcdcd; border-top: 4px solid #e9e9e9; border-bottom: 1px solid #8a8a8a; }
.tab { width: 78px; height: 27px; padding: 0 12px 2px 0; border: 1px solid #8a8a8a; border-bottom: 0; background: linear-gradient(#fdfdfd, #e9e9e9); font-size: 18px; font-weight: 700; color: #111; }
.ptools { height: 34px; flex: none; display: flex; align-items: center; gap: 8px; padding: 0 11px 0 8px; background: #e9e9e9; }
.framed { width: 26px; height: 27px; border: 2px solid #4c62dc; border-radius: 3px; background: #f4f6ff; }
.framed .ico { width: 18px; height: 18px; }
.treewrap { flex: 1; min-height: 0; margin-top: 26px; display: flex; }
.tree { flex: 1; display: grid; grid-auto-rows: minmax(0, 1fr); background: #eee; }
.tree li { display: flex; border-bottom: 1px solid #fdfdfd; background: #efefef; font-size: 15px; border-right: 1px solid #fff; }
.tree li.g { background: #e1e1e1; }
.tree li.b { font-weight: 700; font-size: 16px; }
.cell { width: 309px; flex: none; display: flex; align-items: center; gap: 5px; border-right: 2px solid #fbfbfb; }
.tree li.sel { background: #d6dbdf; }
.tree li.sel .cell { border: 1px dotted #666; border-left: 0; }
.arrow { width: 13px; height: 12px; display: flex; align-items: center; justify-content: center; }
.arrow::before { content: ""; }
.arrow.open::before { border: 5px solid transparent; border-top: 6px solid #111; border-bottom: 0; }
.arrow.shut::before { border: 5px solid transparent; border-left: 6px solid #111; border-right: 0; }

.vbar { width: 22px; flex: none; display: flex; flex-direction: column; background: #c0c0c0; }
.vbar button, .hb { height: 22px; border: 1px solid #a4a4a4; background: #ececec; color: #555; }
.vbar .ico, .hb .ico { width: 13px; height: 13px; }
.thumb { display: flex; align-items: center; justify-content: center; border: 1px solid #999; background: linear-gradient(90deg, #f4f4f4, #d4d4d4); }
.thumb i { width: 10px; height: 9px; background: repeating-linear-gradient(#666 0 1px, transparent 1px 3px); }
.s192 { flex: 192 } .t268 { flex: 268 } .s255 { flex: 255 } .t682 { flex: 682 } .s30 { flex: 30 }

.section { width: 100%; height: 27px; justify-content: flex-start; gap: 5px; padding: 0; background: linear-gradient(#ebebeb 0, #e6e6e6 55%, #d7d7d7 60%, #dcdcdc); border-bottom: 1px solid #777; font-size: 18px; line-height: 24px; font-weight: 700; color: #111; }
.chev { width: 26px; height: 100%; display: flex; align-items: center; justify-content: center; border-right: 1px solid #777; }
.chev .ico { width: 14px; height: 14px; }
.foot { height: 30px; border-top: 3px solid #26283a; }
.foot .chev { padding-right: 6px; }

.editor { flex: 1; min-width: 0; margin: 0 3px 0 4px; display: flex; flex-direction: column; }
.ehead { height: 30px; flex: none; display: flex; align-items: center; gap: 12px; padding: 0 8px 0 6px; background: #2e344f; color: #fff; font-size: 18px; line-height: 24px; font-weight: 500; }
.ehead .latin { font-size: 17px; }
.caret { border: 5px solid transparent; border-left: 7px solid #fff; border-right: 0; }
.wbtns, .ibtns { display: flex; gap: 8px; margin-left: auto; }
.wbtns .ico { width: 15px; height: 15px; }
.blank { height: 35px; flex: none; background: #cdcdcd; border-top: 4px solid #e9e9e9; border-bottom: 1px solid #8a8a8a; }
.fmt { height: 36px; flex: none; padding-left: 7px; background: #eaeaea; border-bottom: 1px solid #555; }
.fmt .sep { margin: 0 -3px; }
.fontbox { display: flex; height: 22px; }
.fontbox input { width: 119px; border: 1px solid #999; background: #ececec; }
.fontbox button { width: 21px; border: 1px solid #999; border-left: 0; }
.fontbox .ico { width: 16px; height: 16px; }
.pick { position: relative; display: flex; height: 22px; }
.pick select { appearance: none; width: 100%; height: 100%; padding: 0 4px; border: 1px solid #888; background: #fff; line-height: 20px; }
.pick::before { content: ""; position: absolute; right: 0; top: 0; width: 20px; height: 100%; box-sizing: border-box; border: 1px solid #888; background: #ddd; pointer-events: none; }
.pick::after { content: ""; position: absolute; right: 5px; top: 9px; border: 5px solid transparent; border-top: 6px solid #111; border-bottom: 0; pointer-events: none; }
.small { width: 47px; }
.small select, .small::before { background: #ececec; border-color: #999; }
.small::after { border-top-color: #888; }

.stage { flex: 1; min-height: 0; display: flex; }
.canvas { flex: 1; min-width: 0; background: #7a7a7a; border-left: 3px solid #e2e2e2; display: flex; justify-content: center; align-items: flex-start; overflow: hidden; }
.device { flex: none; padding: 0 22px 20px 20px; background: #6f8698; }
.black { position: relative; width: 924px; height: 687px; background: #000; }
.siemens { position: absolute; left: 62px; top: 31px; width: 158px; height: 43px; background: #0c8a80; color: #fff; font-size: 31px; line-height: 42px; font-weight: 800; text-align: center; }
.simatic { position: absolute; right: 59px; top: 31px; color: #fff; font: 300 38px/44px "Open Sans", "Noto Sans", sans-serif; }
.screen { position: absolute; left: 65px; top: 145px; width: 800px; height: 480px; border: 4px solid #eee; border-image: repeating-linear-gradient(135deg, #fff 0 2px, #c4c4c4 2px 4px) 4; background: radial-gradient(circle at 4px 4px, #666 0 1px, transparent 1px) 0 0 / 8px 8px #b7b7b7; }
.halo { position: absolute; left: 236px; top: 72px; width: 58px; height: 58px; border-radius: 50%; background: #b9bd2ce6; }
.cart { position: absolute; left: 313px; top: 47px; width: 83px; height: 51px; border: 2px solid #50545c; background: #dadada; }
.wheel { position: absolute; width: 20px; height: 20px; border: 2px solid #555c66; border-radius: 50%; background: #dadada; }
.w1 { left: 330px; top: 96px; }
.w2 { left: 360px; top: 98px; }
.cursor { position: absolute; left: 264px; top: 101px; width: 12px; height: 20px; }
.touch { position: absolute; left: 865px; top: 145px; width: 59px; height: 206px; background: #6f8698; color: #000; writing-mode: vertical-rl; font: 500 60px/59px Roboto, "Liberation Sans", sans-serif; text-align: center; }

.hrow { height: 23px; flex: none; display: flex; background: #e9e9e9; }
.hb { width: 21px; height: 23px; }
.hthumb { flex: 1; margin: 0 5px 0 2px; display: flex; align-items: center; justify-content: center; border: 1px solid #aaa; background: linear-gradient(#f4f4f4, #d6d6d6); }
.hthumb i { width: 10px; height: 9px; background: repeating-linear-gradient(90deg, #666 0 1px, transparent 1px 3px); }
.zoom { width: 194px; margin-left: 8px; height: 22px; font-size: 15px; }
.range { width: 84px; margin: 0 19px 0 22px; display: flex; flex-direction: column; justify-content: center; gap: 1px; }
.range input { appearance: none; width: 100%; height: 12px; background: linear-gradient(#777, #777) center / 100% 1px no-repeat; }
.range input::-webkit-slider-thumb { appearance: none; width: 8px; height: 12px; border: 1px solid #888; border-radius: 0 0 4px 4px; background: #ddd; }
.range i { height: 4px; background: repeating-linear-gradient(90deg, #333 0 2px, transparent 2px 6px); }
.fit { width: 22px; background: #fff; }
.inspector { height: 35px; flex: none; display: flex; align-items: flex-end; justify-content: flex-end; gap: 2px; border-top: 4px solid #26283a; background: #b2b2b2; border-bottom: 1px solid #ddd; }
.itab { width: 93px; height: 26px; justify-content: flex-start; gap: 3px; padding-left: 3px; border: 1px solid #999; border-bottom: 0; background: linear-gradient(#e4e4e4, #cfcfcf); font-size: 18px; line-height: 22px; color: #555; }
.itab.on { background: #f0f0f0; font-weight: 700; color: #111; }
.ibtns { margin: 0 3px 8px 24px; gap: 9px; }
.ibtns .ico { width: 15px; height: 15px; }

.toolbox { width: 413px; flex: none; display: flex; flex-direction: column; background: #efefef; }
.toolbox .phead h2 { font-weight: 400; }
.opt { height: 35px; flex: none; padding-left: 8px; border-top: 4px solid #eaeaea; border-bottom: 1px solid #888; background: linear-gradient(#fafafa, #d6d6d6); font-size: 18px; line-height: 31px; }
.otools { gap: 9px; padding: 0 6px 0 12px; }
.preset { width: 150px; }
.group { flex-basis: 0; border-top: 3px solid #999; display: flex; flex-direction: column; }
.palette { display: flex; justify-content: space-between; padding: 6px 2px 0 8px; height: 45px; }
.palette .pad { width: 36px; }
.last { border-top: 3px solid #999; height: 30px; flex: none; }

.sidetabs { width: 25px; flex: none; padding-top: 38px; display: flex; flex-direction: column; gap: 4px; background: #a9a9a9; border-left: 1px solid #33343c; overflow: hidden; }
.sidetabs button { width: 24px; height: 91px; flex-direction: column; justify-content: flex-start; gap: 4px; padding-top: 4px; border-top: 1px solid #888; background: #d5d5d5; color: #555; }
.sidetabs button.on { height: 111px; background: #f2f2f2; color: #111; }
.sidetabs .st5 { height: 70px; }
.sidetabs span { writing-mode: vertical-rl; text-orientation: sideways; font-size: 19px; line-height: 24px; }

.taskbar { position: relative; height: 28px; flex: none; display: flex; align-items: flex-end; gap: 4px; background: #1c1c1c; }
.portal { width: 216px; height: 23px; justify-content: flex-start; gap: 8px; padding-left: 33px; color: #fff; font-size: 18px; font-weight: 600; line-height: 22px; }
.task { width: 116px; height: 23px; justify-content: flex-start; gap: 6px; padding-left: 4px; background: #c8c8c8; color: #222; font-size: 16px; line-height: 22px; overflow: hidden; }
.task.latin { font-size: 15px; }
.task.on { background: #fff; font-weight: 700; color: #111; }
.arr { width: 25px; height: 23px; margin-left: 39px; background: #c8c8d0; }
.status { margin-left: 4px; height: 24px; display: flex; align-items: center; gap: 4px; padding-left: 4px; border-left: 1px solid #555; color: #fff; }
.edge { position: absolute; right: 0; top: 9px; width: 4px; height: 14px; background: #1d9a4c; }
.ime { position: absolute; right: 4px; bottom: 0; width: 200px; height: 29px; display: flex; align-items: center; gap: 7px; padding: 0 7px 0 38px; justify-content: space-between; background: #f6f9fc; color: #4a5870; }
.ime button { font-size: 19px; font-weight: 700; line-height: 24px; }
.ime .ico { width: 19px; height: 19px; }
.ime .sg { position: absolute; left: -4px; bottom: -1px; width: 36px; height: 36px; }
</style>
